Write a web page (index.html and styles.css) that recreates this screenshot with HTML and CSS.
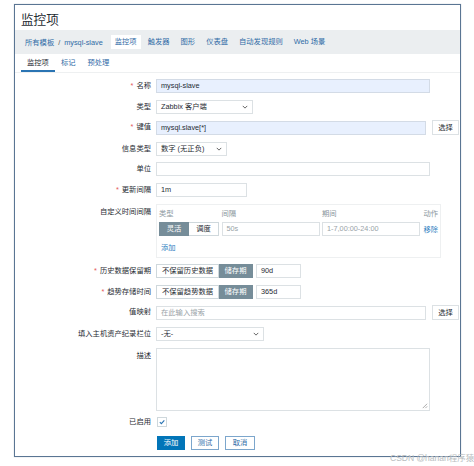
FILE: index.html
```html
<!DOCTYPE html>
<html lang="zh">
<head>
<meta charset="utf-8">
<title>监控项</title>
<link rel="stylesheet" href="styles.css">
</head>
<body>
<div class="frame">
  <div class="header"><h1 class="title">监控项</h1></div>
  <nav class="nav">
    <a class="nav-link">所有模板</a><span class="sep">/</span><a class="nav-link crumb-host">mysql-slave</a>
    <div class="nav-items">
      <a class="nav-item is-active">监控项</a>
      <a class="nav-item">触发器</a>
      <a class="nav-item">图形</a>
      <a class="nav-item">仪表盘</a>
      <a class="nav-item">自动发现规则</a>
      <a class="nav-item">Web 场景</a>
    </div>
  </nav>
  <div class="tabs">
    <a class="tab is-active">监控项</a>
    <a class="tab">标记</a>
    <a class="tab">预处理</a>
  </div>
  <div class="form">
    <div class="label req">名称</div>
    <div class="field"><div class="input input-auto w-full">mysql-slave</div></div>

    <div class="label">类型</div>
    <div class="field"><div class="select w-type">Zabbix 客户端<svg class="chev" viewBox="0 0 8 5"><path d="M1 1l3 3 3-3" /></svg></div></div>

    <div class="label req">键值</div>
    <div class="field field-row"><div class="input input-auto w-key">mysql.slave[*]</div><div class="btn-plain">选择</div></div>

    <div class="label">信息类型</div>
    <div class="field"><div class="select w-info">数字 (无正负)<svg class="chev" viewBox="0 0 8 5"><path d="M1 1l3 3 3-3" /></svg></div></div>

    <div class="label">单位</div>
    <div class="field"><div class="input w-full"></div></div>

    <div class="label req">更新间隔</div>
    <div class="field"><div class="input w-delay">1m</div></div>

    <div class="label label-top">自定义时间间隔</div>
    <div class="field">
      <div class="intervals">
        <div class="iv-grid">
          <div class="iv-head">类型</div>
          <div class="iv-head">间隔</div>
          <div class="iv-head">期间</div>
          <div class="iv-head iv-action">动作</div>
          <div class="seg">
            <div class="seg-btn is-on">灵活</div><div class="seg-btn">调度</div>
          </div>
          <div class="input w-iv muted">50s</div>
          <div class="input w-iv muted">1-7,00:00-24:00</div>
          <a class="link iv-action">移除</a>
        </div>
        <a class="link add-link">添加</a>
      </div>
    </div>

    <div class="label req">历史数据保留期</div>
    <div class="field field-row">
      <div class="seg"><div class="seg-btn w-seg1">不保留历史数据</div><div class="seg-btn is-on w-seg2">储存期</div></div>
      <div class="input w-keep">90d</div>
    </div>

    <div class="label req">趋势存储时间</div>
    <div class="field field-row">
      <div class="seg"><div class="seg-btn w-seg1">不保留趋势数据</div><div class="seg-btn is-on w-seg2">储存期</div></div>
      <div class="input w-keep">365d</div>
    </div>

    <div class="label">值映射</div>
    <div class="field field-row"><div class="input w-key placeholder">在此输入搜索</div><div class="btn-plain">选择</div></div>

    <div class="label">填入主机资产纪录栏位</div>
    <div class="field"><div class="select w-inv">-无-<svg class="chev" viewBox="0 0 8 5"><path d="M1 1l3 3 3-3" /></svg></div></div>

    <div class="label label-top">描述</div>
    <div class="field"><div class="textarea w-full"><svg class="grip" viewBox="0 0 8 8"><path d="M7 2L2 7M7 5L5 7" /></svg></div></div>

    <div class="label label-check">已启用</div>
    <div class="field"><div class="checkbox"><svg viewBox="0 0 10 10"><path d="M2.3 5.2l1.9 1.9 3.7-4" /></svg></div></div>

    <div class="label"></div>
    <div class="field field-row buttons">
      <div class="btn btn-primary">添加</div>
      <div class="btn btn-alt">测试</div>
      <div class="btn btn-alt w-cancel">取消</div>
    </div>
  </div>
</div>
<div class="watermark">CSDN @hanan程序猿</div>
</body>
</html>
```

FILE: styles.css
```css
html, body {
  margin: 0;
  padding: 0;
  background: #ffffff;
}
body {
  width: 474px;
  height: 466px;
  position: relative;
  overflow: hidden;
  font-family: "Liberation Sans", "Noto Sans CJK SC", sans-serif;
  font-size: 7.3px;
  color: #1f2c33;
}
.frame {
  margin: 4px 0 0 14px;
  width: 445px;
  height: 451px;
  border: 1px solid #5a7593;
  box-shadow: 0 0 1px rgba(60, 90, 120, 0.4);
  background: #fff;
  display: flex;
  flex-direction: column;
}
.header {
  height: 25px;
  display: flex;
  align-items: center;
  padding-left: 6px;
}
.title {
  margin: 0;
  font-size: 12.6px;
  font-weight: normal;
  color: #1f2c33;
  padding-top: 1px;
}
.nav {
  height: 24px;
  background: #ebeef0;
  display: flex;
  align-items: center;
  padding-left: 10px;
}
.nav-link {
  color: #2f6ba6;
}
.sep {
  color: #555;
  margin: 0 4px;
}
.nav-items {
  display: flex;
  align-items: center;
  gap: 3px;
  margin-left: 8px;
}
.nav-item {
  color: #2f6ba6;
  padding: 0 4px;
  line-height: 14px;
}
.nav-item.is-active {
  background: #ffffff;
  color: #2f6ba6;
}
.tabs {
  height: 18px;
  display: flex;
  padding-left: 6px;
  border-bottom: 1px solid #eef0f1;
}
.tab {
  padding: 0 6px;
  line-height: 18px;
  color: #2f6ba6;
  box-sizing: border-box;
}
.tab.is-active {
  color: #1f2c33;
  border-bottom: 2px solid #2a74b3;
  line-height: 17px;
}
.form {
  display: grid;
  grid-template-columns: 136px 1fr;
  column-gap: 5px;
  row-gap: 6.6px;
  padding-top: 6px;
}
.label {
  text-align: right;
  line-height: 14px;
  color: #1f2c33;
  white-space: nowrap;
}
.label.req::before {
  content: "*";
  color: #e45959;
  margin-right: 3px;
}
.label-top {
  line-height: 16px;
}
.label-check {
  line-height: 10px;
}
.field {
  display: flex;
  align-items: flex-start;
}
.field-row {
  gap: 6px;
  align-items: center;
}
.input, .select, .textarea {
  box-sizing: border-box;
  height: 14px;
  border: 1px solid #dce1e4;
  background: #fff;
  line-height: 12px;
  padding: 0 4px;
  white-space: nowrap;
  overflow: hidden;
  color: #1f2c33;
}
.input-auto {
  background: #e8f0fe;
  border-color: #d3dbe6;
}
.w-full { width: 274px; }
.w-key { width: 270px; }
.w-type { width: 97px; }
.w-info { width: 71px; }
.w-delay { width: 91px; }
.w-inv { width: 108px; }
.w-keep { width: 45px; margin-left: -3px; }
.select {
  display: flex;
  align-items: center;
  justify-content: space-between;
}
.chev {
  width: 6px;
  height: 4px;
  fill: none;
  stroke: #555;
  stroke-width: 1.2;
}
.btn-plain {
  box-sizing: border-box;
  width: 27px;
  height: 15px;
  border: 1px solid #dce1e4;
  background: #fff;
  line-height: 13px;
  text-align: center;
  color: #1f2c33;
}
.placeholder, .muted {
  color: #9aa3a8;
}
.intervals {
  box-sizing: border-box;
  width: 285px;
  height: 54px;
  border: 1px solid #eef0f1;
  padding: 3px 2px 0 2px;
}
.iv-grid {
  display: grid;
  grid-template-columns: 60px 98px 98px 1fr;
  column-gap: 2.5px;
  row-gap: 2px;
  align-items: center;
  white-space: nowrap;
}
.iv-head {
  color: #8b979e;
  line-height: 12px;
  height: 12px;
}
.iv-action {
  padding-left: 1px;
  white-space: nowrap;
}
.w-iv { width: 98px; }
.seg {
  display: flex;
}
.seg-btn {
  box-sizing: border-box;
  height: 14px;
  line-height: 12px;
  border: 1px solid #cfd8dc;
  background: #fff;
  text-align: center;
  width: 30px;
  color: #1f2c33;
}
.seg-btn + .seg-btn {
  border-left: none;
}
.seg-btn.is-on {
  background: #768d99;
  border-color: #768d99;
  color: #fff;
}
.w-seg1 { width: 63px; }
.w-seg2 { width: 34px; }
.link {
  color: #2f7fc1;
}
.add-link {
  display: block;
  margin-top: 6px;
  padding-left: 2px;
}
.textarea {
  height: 63px;
  position: relative;
}
.grip {
  position: absolute;
  right: 1px;
  bottom: 1px;
  width: 7px;
  height: 7px;
  fill: none;
  stroke: #888;
  stroke-width: 0.8;
}
.checkbox {
  box-sizing: border-box;
  width: 10px;
  height: 10px;
  border: 1px solid #cfd8dc;
  background: #fff;
  margin-left: 1px;
}
.checkbox svg {
  display: block;
  width: 8px;
  height: 8px;
  fill: none;
  stroke: #2a74b3;
  stroke-width: 1.4;
}
.buttons {
  margin-top: 2px;
  margin-left: 1px;
}
.btn {
  box-sizing: border-box;
  width: 28px;
  height: 14px;
  line-height: 12px;
  text-align: center;
}
.btn-primary {
  background: #0275b8;
  border: 1px solid #0275b8;
  color: #fff;
}
.btn-alt {
  background: #fff;
  border: 1px solid #7ca6cc;
  color: #2f6ba6;
}
.w-cancel { width: 30px; }
.watermark {
  position: absolute;
  left: 390px;
  top: 451px;
  font-size: 8.5px;
  color: #b9bdc0;
  white-space: nowrap;
}
```
